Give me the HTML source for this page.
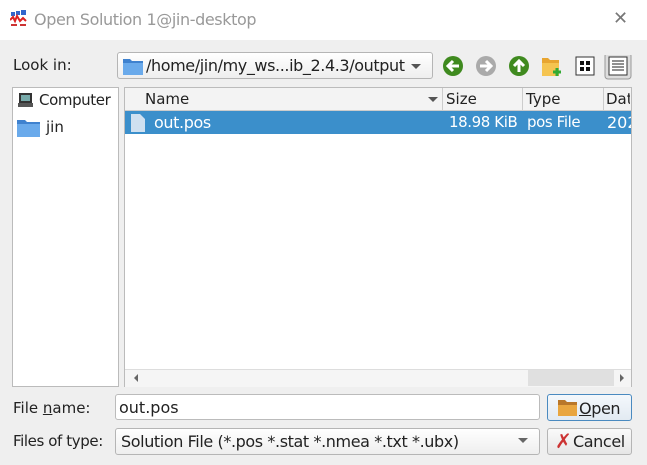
<html><head><style>
body{margin:0;width:647px;height:465px;background:#efefef;font-family:"DejaVu Sans","Liberation Sans",sans-serif;font-size:15px;color:#222;position:relative;overflow:hidden}
.a{position:absolute}
.btn{background:linear-gradient(#fafafa,#e6e6e6);border:1px solid #b5b5b5;border-radius:3px;box-sizing:border-box}
.n{letter-spacing:-0.4px}
</style></head><body>
<div class="a" style="left:0;top:0;width:647px;height:40px;background:#fff"></div>
<div class="a" style="top:10px;left:10px;width:18px;height:20px">
<svg width="18" height="20"><rect x="1" y="2" width="4" height="4" fill="#36c"/><rect x="6" y="1" width="4" height="4" fill="#36c"/><rect x="11" y="0" width="5" height="5" fill="#36c"/><path d="M0 10l3-3 2 4 2-5 3 5 3-3 3 3" stroke="#d22" fill="none" stroke-width="2"/><path d="M1 15h6M10 15h6" stroke="#c33" stroke-width="2"/></svg></div>
<div class="a n" style="left:34px;top:10px;color:#999;font-size:16px">Open Solution 1@jin-desktop</div>
<div class="a" style="left:613px;top:8px;color:#777;font-size:18px">✕</div>
<div class="a" style="left:13px;top:56px">Look in:</div>
<div class="a btn" style="left:117px;top:52px;width:316px;height:27px;background:linear-gradient(#fff,#eee)">
<svg class="a" style="left:5px;top:4px" width="20" height="18"><path d="M0 2h7l2 2h11v14H0z" fill="#3f82cf"/><rect x="0" y="6" width="20" height="12" fill="#6aaaeb"/></svg>
<div class="a n" style="left:28px;top:3px;font-size:16px">/home/jin/my_ws...ib_2.4.3/output</div>
<div class="a" style="left:293px;top:11px;border:5px solid transparent;border-top:5px solid #555;width:0;height:0"></div></div>
<svg class="a" style="left:443px;top:55px" width="200" height="26">
<circle cx="10" cy="11" r="10" fill="#3f8a1f"/><path d="M16 11H6M10 6l-5 5 5 5" stroke="#fff" stroke-width="3" fill="none"/>
<circle cx="43" cy="11" r="10" fill="#aaa"/><path d="M37 11h10M43 6l5 5-5 5" stroke="#fff" stroke-width="3" fill="none"/>
<circle cx="76" cy="11" r="10" fill="#3f8a1f"/><path d="M76 17V6M71 11l5-5 5 5" stroke="#fff" stroke-width="3" fill="none"/>
<path d="M99 3h6l2 2h9v16h-17z" fill="#e8a530"/><path d="M99 8h17v13h-17z" fill="#f5c450"/><path d="M114 13v8M110 17h8" stroke="#3a3" stroke-width="3"/>
<rect x="133" y="2" width="18" height="18" fill="#fff" stroke="#333"/><rect x="137" y="6" width="4" height="4" fill="#111"/><rect x="143" y="6" width="4" height="4" fill="#111"/><rect x="137" y="12" width="4" height="4" fill="#111"/><rect x="143" y="12" width="4" height="4" fill="#111"/>
<rect x="162" y="-2" width="26" height="26" rx="3" fill="#ddd" stroke="#999"/><rect x="166" y="2" width="18" height="18" fill="#fff" stroke="#333"/><path d="M169 6h12M169 9h12M169 12h12M169 15h12" stroke="#222"/>
</svg>
<div class="a" style="left:12px;top:87px;width:107px;height:300px;background:#fff;border:1px solid #bbb;box-sizing:border-box"></div>
<svg class="a" style="left:17px;top:92px" width="18" height="16"><rect x="2" y="1" width="13" height="10" fill="#333"/><rect x="4" y="3" width="9" height="6" fill="#7aa"/><rect x="1" y="11" width="15" height="4" fill="#555"/></svg>
<div class="a n" style="left:39px;top:91px">Computer</div>
<svg class="a" style="left:17px;top:118px" width="24" height="20"><path d="M0 2h8l2 2h13v15H0z" fill="#3f82cf"/><rect x="0" y="6" width="23" height="13" fill="#6aaaeb"/></svg>
<div class="a" style="left:46px;top:118px">jin</div>
<div class="a" style="left:124px;top:87px;width:508px;height:300px;background:#fff;border:1px solid #bbb;box-sizing:border-box"></div>
<div class="a" style="left:125px;top:88px;width:506px;height:22px;background:#f3f3f3;border-bottom:1px solid #ccc"></div>
<div class="a" style="left:145px;top:90px">Name</div>
<div class="a" style="left:428px;top:97px;border:5px solid transparent;border-top:5px solid #555;width:0;height:0"></div>
<div class="a" style="left:442px;top:88px;width:1px;height:22px;background:#ccc"></div>
<div class="a" style="left:446px;top:90px">Size</div>
<div class="a" style="left:522px;top:88px;width:1px;height:22px;background:#ccc"></div>
<div class="a" style="left:526px;top:90px">Type</div>
<div class="a" style="left:603px;top:88px;width:1px;height:22px;background:#ccc"></div>
<div class="a" style="left:606px;top:90px;width:24px;overflow:hidden">Date</div>
<div class="a" style="left:125px;top:111px;width:506px;height:23px;background:#3b8fcb"></div>
<svg class="a" style="left:130px;top:113px" width="16" height="20"><path d="M1 1h9l5 5v13H1z" fill="#cfe0f0"/></svg>
<div class="a n" style="left:154px;top:113px;color:#fff;font-size:16px">out.pos</div>
<div class="a n" style="left:449px;top:113px;color:#fff;font-size:15px">18.98 KiB</div>
<div class="a n" style="left:527px;top:113px;color:#fff;font-size:15px">pos File</div>
<div class="a" style="left:607px;top:113px;color:#fff;font-size:16px;width:24px;overflow:hidden">2021</div>
<div class="a" style="left:125px;top:369px;width:506px;height:17px;background:#f5f5f5;border-top:1px solid #ddd"></div>
<div class="a" style="left:528px;top:370px;width:86px;height:16px;background:#e0e0e0"></div>
<div class="a" style="left:130px;top:374px;border:4px solid transparent;border-right:4px solid #666;width:0;height:0"></div>
<div class="a" style="left:620px;top:374px;border:4px solid transparent;border-left:4px solid #666;width:0;height:0"></div>
<div class="a" style="left:13px;top:399px">File <u>n</u>ame:</div>
<div class="a" style="left:115px;top:394px;width:425px;height:26px;background:#fff;border:1px solid #bbb;border-radius:3px;box-sizing:border-box"></div>
<div class="a" style="left:119px;top:398px;font-size:16px">out.pos</div>
<div class="a btn" style="left:547px;top:394px;width:85px;height:27px;border-color:#4a8ac0;background:linear-gradient(#f4f8fc,#e2eaf2)"></div>
<svg class="a" style="left:557px;top:397px" width="22" height="20"><path d="M1 3h7l2 2h10v14H1z" fill="#b9772a"/><path d="M1 8h19v11H1z" fill="#e9a640"/></svg>
<div class="a n" style="left:579px;top:399px;font-size:16px"><u>O</u>pen</div>
<div class="a n" style="left:13px;top:432px">Files of type:</div>
<div class="a btn" style="left:115px;top:428px;width:425px;height:27px;background:linear-gradient(#fff,#eee)"></div>
<div class="a n" style="left:121px;top:432px;font-size:16px">Solution File (*.pos *.stat *.nmea *.txt *.ubx)</div>
<div class="a" style="left:518px;top:438px;border:5px solid transparent;border-top:5px solid #666;width:0;height:0"></div>
<div class="a btn" style="left:547px;top:428px;width:85px;height:27px"></div>
<div class="a" style="left:555px;top:429px;color:#c33;font-size:20px;font-weight:bold">✗</div>
<div class="a n" style="left:573px;top:432px;font-size:16px">Cancel</div>
</body></html>
